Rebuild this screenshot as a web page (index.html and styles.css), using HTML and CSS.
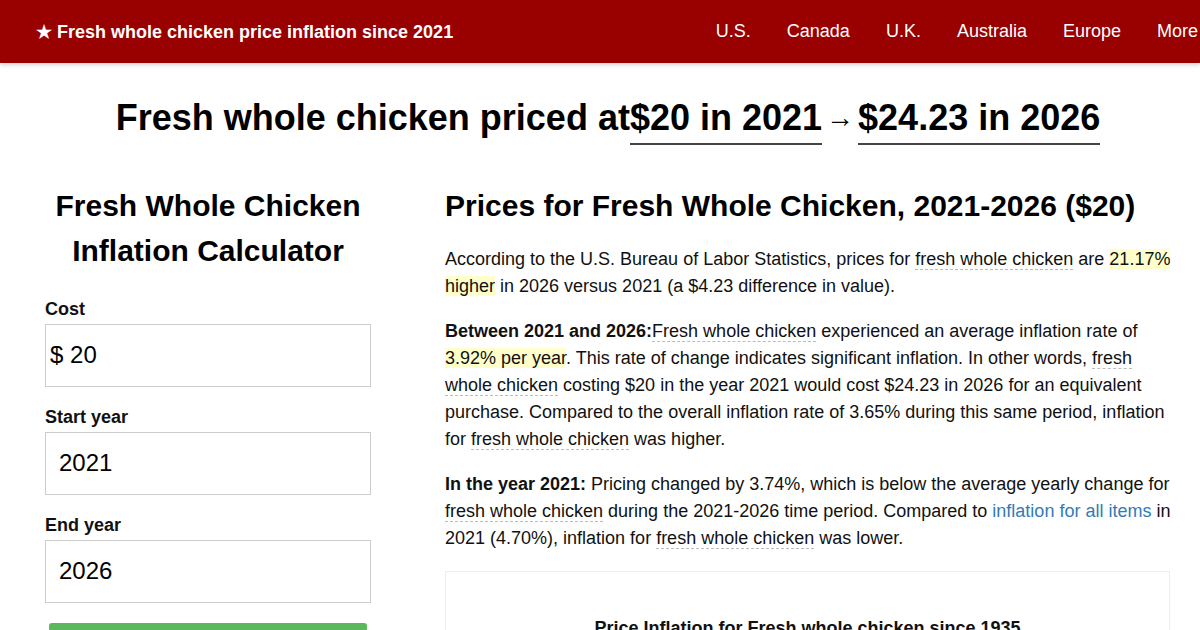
FILE: index.html
```html
<!DOCTYPE html>
<html>
<head>
<meta charset="utf-8">
<link rel="stylesheet" href="styles.css">
</head>
<body>
<header class="topbar">
  <div class="brand">★ Fresh whole chicken price inflation since 2021</div>
  <nav class="nav">
    <a>U.S.</a><a>Canada</a><a>U.K.</a><a>Australia</a><a>Europe</a><a>More</a>
  </nav>
</header>
<h1 class="headline">Fresh whole chicken priced at<span class="uline">$20 in 2021</span><span class="arrow">→</span><span class="uline">$24.23 in 2026</span></h1>
<div class="main">
  <aside class="calc">
    <h2 class="calc-title">Fresh Whole Chicken Inflation Calculator</h2>
    <label class="lbl">Cost</label>
    <div class="field cost"><span class="cur">$</span> 20</div>
    <label class="lbl">Start year</label>
    <div class="field">2021</div>
    <label class="lbl">End year</label>
    <div class="field">2026</div>
    <div class="btn"></div>
  </aside>
  <section class="content">
    <h2 class="sec-title">Prices for Fresh Whole Chicken, 2021-2026 ($20)</h2>
    <p>According to the U.S. Bureau of Labor Statistics, prices for <span class="dot">fresh whole chicken</span> are <span class="hl">21.17% higher</span> in 2026 versus 2021 (a $4.23 difference in value).</p>
    <p><b>Between 2021 and 2026:</b><span class="dot">Fresh whole chicken</span> experienced an average inflation rate of <span class="hl">3.92% per year</span>. This rate of change indicates significant inflation. In other words, <span class="dot">fresh whole chicken</span> costing $20 in the year 2021 would cost $24.23 in 2026 for an equivalent purchase. Compared to the overall inflation rate of 3.65% during this same period, inflation for <span class="dot">fresh whole chicken</span> was higher.</p>
    <p><b>In the year 2021:</b> Pricing changed by 3.74%, which is below the average yearly change for <span class="dot">fresh whole chicken</span> during the 2021-2026 time period. Compared to <a class="link">inflation for all items</a> in 2021 (4.70%), inflation for <span class="dot">fresh whole chicken</span> was lower.</p>
    <div class="chart">
      <div class="chart-title">Price Inflation for Fresh whole chicken since 1935</div>
    </div>
  </section>
</div>
</body>
</html>
```
FILE: styles.css
```css
html, body { margin: 0; padding: 0; }
body {
  font-family: "Liberation Sans", Arial, sans-serif;
  color: #111;
  background: #fff;
  width: 1200px;
  height: 630px;
  overflow: hidden;
}
.topbar {
  height: 63px;
  background: #990000;
  display: flex;
  align-items: center;
  justify-content: space-between;
  padding: 0 0 0 36px;
  box-shadow: 0 2px 4px rgba(0,0,0,0.18);
  color: #fff;
}
.brand {
  font-weight: bold;
  font-size: 18px;
}
.nav { display: flex; margin-right: 2px; }
.nav a {
  font-size: 18px;
  color: #fff;
  margin-left: 36px;
}
.headline {
  margin: 34px 0 0;
  padding-left: 16px;
  text-align: center;
  font-size: 36px;
  font-weight: bold;
  line-height: 42px;
  color: #000;
}
.uline {
  display: inline-block;
  border-bottom: 2px solid #444;
  padding-bottom: 4px;
}
.arrow {
  display: inline-block;
  width: 36px;
  text-align: center;
  font-weight: normal;
  font-size: 28px;
  vertical-align: 3px;
}
.main {
  display: flex;
  margin-top: 28px;
}
.calc {
  width: 326px;
  flex: none;
  padding: 0 0 0 45px;
  margin-right: 74px;
}
.calc-title {
  margin: 10px 0 26px;
  text-align: center;
  font-size: 30px;
  line-height: 45px;
  font-weight: bold;
  color: #000;
}
.lbl {
  display: block;
  font-size: 18px;
  font-weight: bold;
  margin-bottom: 4px;
}
.field {
  box-sizing: border-box;
  height: 63px;
  border: 1px solid #ccc;
  font-size: 24px;
  line-height: 59px;
  padding-left: 13px;
  margin-bottom: 20px;
  color: #000;
}
.field.cost { padding-left: 4px; }
.btn {
  margin: 11px 4px 0;
  height: 40px;
  background: #5cb85c;
  border-radius: 3px;
}
.content {
  width: 730px;
  flex: none;
}
.sec-title {
  font-size: 30px;
  font-weight: bold;
  margin: 15px 0 22px;
  line-height: 36px;
  color: #000;
}
.content p {
  font-size: 18px;
  line-height: 27px;
  margin: 0 0 18px;
  color: #111;
}
.dot { border-bottom: 1px dashed #bbb; }
.hl { background: #ffffcc; }
.link { color: #337ab7; }
.chart {
  margin: 19px 5px 0 0;
  border: 1px solid #eee;
  height: 200px;
}
.chart-title {
  text-align: center;
  font-weight: bold;
  font-size: 18px;
  margin-top: 46px;
}
```
